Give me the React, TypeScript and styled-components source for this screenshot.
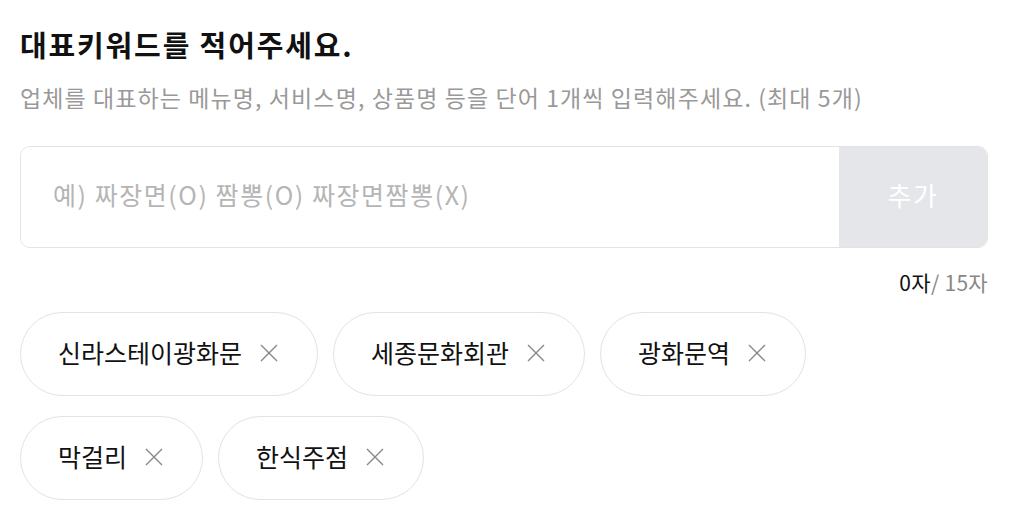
import React from "react";
import styled, { createGlobalStyle } from "styled-components";

const Global = createGlobalStyle`
  html, body { margin: 0; padding: 0; background: #fff; }
  body { font-family: "Noto Sans CJK KR", "Noto Sans", sans-serif; color: #111; }
`;

const Page = styled.div`
  padding: 22px 34px 0 20px;
  display: flex;
  flex-direction: column;
`;

const Title = styled.h1`
  margin: 0;
  font-size: 29px;
  font-weight: 700;
  letter-spacing: 1.85px;
  line-height: 44px;
  color: #111;
`;

const Sub = styled.p`
  margin: 15px 0 0;
  font-size: 23px;
  line-height: 32px;
  color: #999;
  letter-spacing: 1.1px;
`;

const InputRow = styled.div`
  margin-top: 33px;
  display: flex;
  height: 100px;
  border: 1px solid #e3e3e3;
  border-radius: 10px;
  overflow: hidden;
`;

const Input = styled.input`
  flex: 1;
  border: none;
  outline: none;
  padding: 0 0 6px 32px;
  font-family: inherit;
  font-size: 25px;
  color: #111;
  letter-spacing: 1.55px;
  &::placeholder { color: #b5b5b5; }
`;

const AddButton = styled.button`
  width: 148px;
  border: none;
  padding: 0 0 6px;
  background: #e5e6ea;
  color: #fff;
  font-family: inherit;
  font-size: 26px;
  letter-spacing: 1.5px;
`;

const Counter = styled.div`
  margin-top: 18px;
  text-align: right;
  font-size: 21px;
  line-height: 32px;
  letter-spacing: 0.3px;
  color: #111;
`;

const Max = styled.span`
  color: #888;
`;

const Chips = styled.div`
  margin-top: 14px;
  display: flex;
  flex-wrap: wrap;
  gap: 20px 15px;
`;

const Chip = styled.div`
  height: 84px;
  box-sizing: border-box;
  border: 1px solid #e3e3e3;
  border-radius: 42px;
  padding: 0 39px 4px 37px;
  display: flex;
  align-items: center;
  gap: 18px;
  font-size: 25px;
  letter-spacing: 0;
  color: #111;
`;

const Close = styled.svg`
  width: 18px;
  height: 18px;
  flex: none;
  margin-top: 2px;
`;

const keywords = ["신라스테이광화문", "세종문화회관", "광화문역", "막걸리", "한식주점"];

export default function App() {
  return (
    <>
      <Global />
      <Page>
        <Title>대표키워드를 적어주세요.</Title>
        <Sub>업체를 대표하는 메뉴명, 서비스명, 상품명 등을 단어 1개씩 입력해주세요. (최대 5개)</Sub>
        <InputRow>
          <Input placeholder="예) 짜장면(O) 짬뽕(O) 짜장면짬뽕(X)" />
          <AddButton>추가</AddButton>
        </InputRow>
        <Counter>
          0자<Max>/ 15자</Max>
        </Counter>
        <Chips>
          {keywords.map((k) => (
            <Chip key={k}>
              {k}
              <Close viewBox="0 0 18 18">
                <path d="M1 1 L17 17 M17 1 L1 17" stroke="#888" strokeWidth="1.4" fill="none" />
              </Close>
            </Chip>
          ))}
        </Chips>
      </Page>
    </>
  );
}
